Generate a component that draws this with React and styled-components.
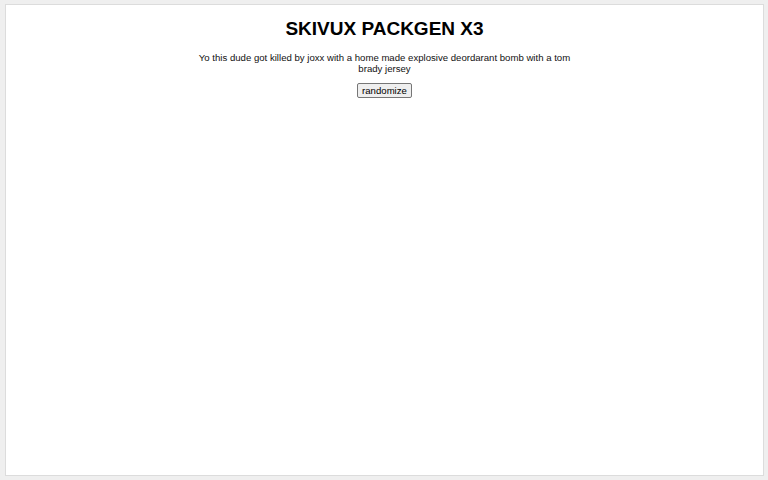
import React, { useState } from "react";
import styled, { createGlobalStyle } from "styled-components";

const packs = [
  "Yo this dude got killed by joxx with a home made explosive deordarant bomb with a tom brady jersey",
];

const Global = createGlobalStyle`
  html, body {
    margin: 0;
    padding: 0;
    background: #efefef;
    font-family: "Liberation Sans", Arial, sans-serif;
  }
`;

const Page = styled.div`
  padding: 4px 4px 4px 5px;
  height: 480px;
  box-sizing: border-box;
`;

const Card = styled.div`
  background: #fff;
  border: 1px solid #dcdcdc;
  height: 100%;
  box-sizing: border-box;
  display: flex;
  flex-direction: column;
  align-items: center;
  padding-top: 13px;
`;

const Title = styled.h1`
  margin: 0;
  font-size: 19px;
  line-height: 22px;
  font-weight: bold;
  color: #000;
`;

const Line = styled.p`
  margin: 12px 0 0;
  max-width: 390px;
  font-size: 9.6px;
  line-height: 11px;
  text-align: center;
  color: #111;
`;

const Button = styled.button`
  margin-top: 9px;
  font-family: "Liberation Sans", Arial, sans-serif;
  font-size: 9.6px;
  padding: 1px 4px;
  background: #efefef;
  border: 1px solid #767676;
  border-radius: 2px;
  color: #000;
`;

export default function App() {
  const [idx, setIdx] = useState(0);
  return (
    <>
      <Global />
      <Page>
        <Card>
          <Title>SKIVUX PACKGEN X3</Title>
          <Line>{packs[idx]}</Line>
          <Button onClick={() => setIdx((idx + 1) % packs.length)}>randomize</Button>
        </Card>
      </Page>
    </>
  );
}
